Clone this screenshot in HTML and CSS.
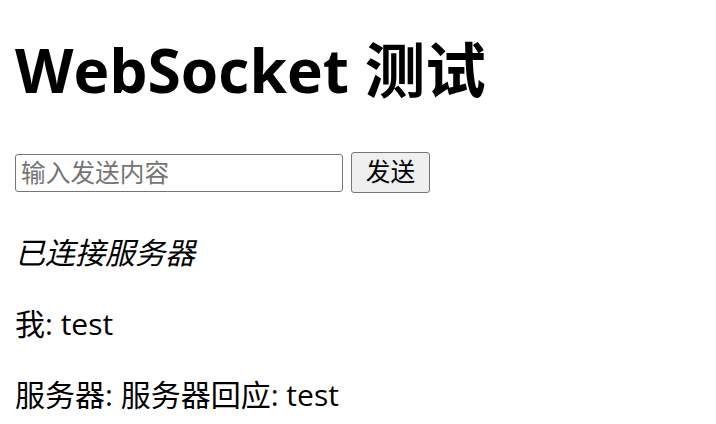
FILE: index.html
```html
<!DOCTYPE html>
<html lang="zh-CN">
<head>
<meta charset="utf-8">
<title>WebSocket 测试</title>
<link rel="stylesheet" href="styles.css">
</head>
<body>
<h1 class="title">WebSocket 测试</h1>
<div class="send-row">
  <input class="msg-input" type="text" placeholder="输入发送内容">
  <button class="send-btn" type="button">发送</button>
</div>
<div class="messages">
  <p class="msg status">已连接服务器</p>
  <p class="msg">我: test</p>
  <p class="msg">服务器: 服务器回应: test</p>
</div>
</body>
</html>
```

FILE: styles.css
```css
html, body {
  background: #ffffff;
}
body {
  margin: 0;
  padding: 0 15px;
  font-family: "Open Sans", "Noto Sans CJK SC", sans-serif;
  font-size: 30px;
  color: #000000;
}
.title {
  margin: 31px 0 0;
  font-size: 60.5px;
  line-height: 78px;
  font-weight: 700;
}
.send-row {
  display: flex;
  align-items: center;
  gap: 8px;
  margin-top: 43px;
  height: 41px;
}
.msg-input {
  box-sizing: border-box;
  width: 328px;
  height: 38px;
  margin: 0;
  padding: 0 5px;
  border: 1px solid #767676;
  border-radius: 3px;
  font-family: "Open Sans", "Noto Sans CJK SC", sans-serif;
  font-size: 24.7px;
  color: #000;
  background: #fff;
  outline: none;
}
.msg-input::placeholder {
  color: #757575;
}
.send-btn {
  box-sizing: border-box;
  width: 79px;
  height: 41px;
  margin: 0;
  padding: 0;
  border: 1px solid #767676;
  border-radius: 3px;
  background: #efefef;
  font-family: "Open Sans", "Noto Sans CJK SC", sans-serif;
  font-size: 24.7px;
  color: #000;
  line-height: 1;
}
.messages {
  margin-top: 40px;
  display: flex;
  flex-direction: column;
  gap: 31px;
}
.msg {
  margin: 0;
  line-height: 40px;
}
.status {
  font-style: italic;
}
```
